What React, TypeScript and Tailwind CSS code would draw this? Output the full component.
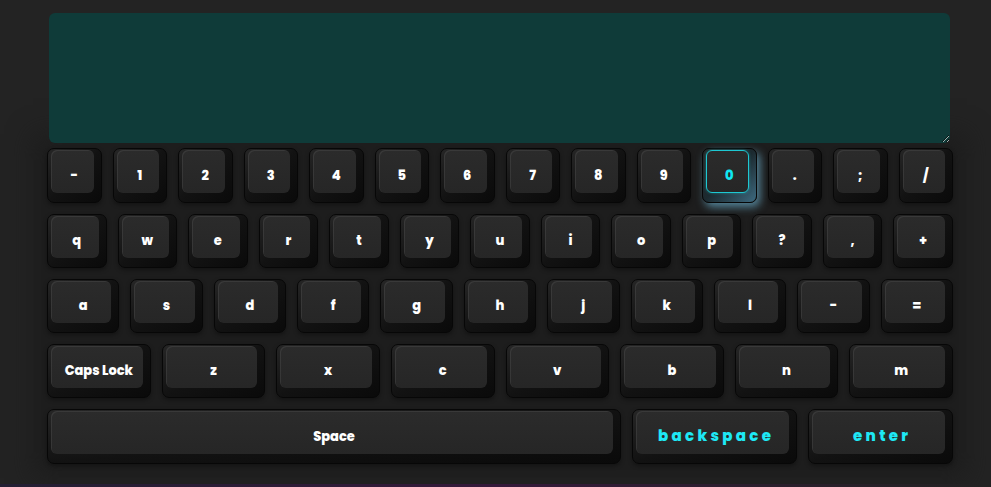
import React from "react";

const ROWS: { keys: string[]; h: string }[] = [
  { keys: ["-", "1", "2", "3", "4", "5", "6", "7", "8", "9", "0", ".", ";", "/"], h: "h-[55px]" },
  { keys: ["q", "w", "e", "r", "t", "y", "u", "i", "o", "p", "?", ",", "+"], h: "h-[54px]" },
  { keys: ["a", "s", "d", "f", "g", "h", "j", "k", "l", "-", "="], h: "h-[54px]" },
  { keys: ["Caps Lock", "z", "x", "c", "v", "b", "n", "m"], h: "h-[54px]" },
];

const FONT = { fontFamily: "Poppins, Inter, 'Noto Sans', sans-serif" };

type KeyProps = {
  label: string;
  active?: boolean;
  accent?: boolean;
  className?: string;
};

const Key: React.FC<KeyProps> = ({ label, active, accent, className = "" }) => {
  return (
    <div
      className={`flex rounded-[7px] border border-[#070707] bg-gradient-to-br pt-[1px] pl-[3px] pr-[7px] pb-[9px] ${
        active
          ? "from-[#262626] via-[#1c2a30] to-[#3d6a80] shadow-[3px_4px_9px_rgba(120,200,235,0.6)]"
          : "from-[#262626] via-[#121212] to-[#0a0a0a] shadow-[0_2px_4px_rgba(0,0,0,0.35)]"
      } ${className}`}
    >
      <div
        className={`flex flex-1 items-center justify-center rounded-[6px] bg-gradient-to-b from-[#2b2b2b] to-[#262626] pt-[8px] pl-[4px] ${
          active
            ? "border border-[#1ec8d2] shadow-[0_0_3px_rgba(30,200,210,0.5)]"
            : "shadow-[inset_1px_1px_0_rgba(255,255,255,0.07)]"
        }`}
      >
        <span
          className={
            accent
              ? "text-[15px] font-extrabold tracking-[0.22em] text-[#1ee8f5] pl-[0.22em]"
              : active
              ? "text-[13px] font-extrabold text-[#10e6f2]"
              : "text-[13px] font-extrabold text-white"
          }
        >
          {label}
        </span>
      </div>
    </div>
  );
};

export default function App() {
  return (
    <div className="flex h-[487px] w-[991px] flex-col overflow-hidden bg-[#232323]" style={FONT}>
      <div className="ml-[47px] mt-[13px] flex w-[906px] flex-col">
        <textarea
          autoFocus
          className="relative z-10 ml-[2px] mr-[3px] h-[130px] resize rounded-[6px] bg-[#0f3b39] px-[7px] py-[2px] text-sm text-white caret-[#cfe] outline-none"
        />
        <div className="mt-[5px] flex flex-col gap-[11px] bg-[#1d1d1d] shadow-[0_0_24px_14px_#1d1d1d]">
          {ROWS.map((row, i) => (
            <div key={i} className={`flex gap-[11px] ${row.h}`}>
              {row.keys.map((k, j) => (
                <Key key={j} label={k} active={i === 0 && k === "0"} className="flex-1" />
              ))}
            </div>
          ))}
          <div className="flex h-[55px] gap-[11px]">
            <Key label="Space" className="w-[574px] shrink-0" />
            <Key label="backspace" accent className="w-[165px] shrink-0" />
            <Key label="enter" accent className="w-[145px] shrink-0" />
          </div>
        </div>
      </div>
      <div className="mt-auto h-[3px] bg-gradient-to-r from-[#231f33] via-[#35193a] to-[#222222]" />
    </div>
  );
}
